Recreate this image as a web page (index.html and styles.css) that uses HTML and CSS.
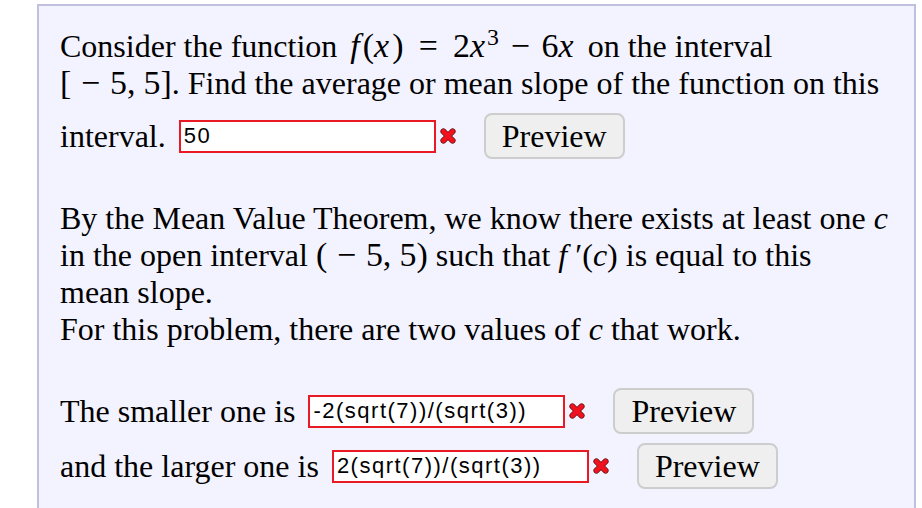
FILE: index.html
```html
<!DOCTYPE html>
<html>
<head>
<meta charset="utf-8">
<link rel="stylesheet" href="styles.css">
</head>
<body>
<div class="problem">
  <div class="para p1">
    <div class="line">Consider the function <span class="m m-eq"><i>f</i>(<i>x</i>)<span class="rel">=</span>2<i class="base">x</i><sup>3</sup><span class="bin">−</span>6<i>x</i></span> on the interval</div>
    <div class="line"><span class="m">[<span class="bin">−</span>5,<span class="thin"></span>5]</span>. Find the average or mean slope of the function on this</div>
    <div class="row">interval.<input class="ans" type="text" value="50"><svg class="x" viewBox="0 0 16 16"><path d="M3.4 3.4L12.6 12.6M12.6 3.4L3.4 12.6" stroke="#6d1414" stroke-width="6" stroke-linecap="round"/><path d="M3.4 3.4L12.6 12.6M12.6 3.4L3.4 12.6" stroke="#f2121f" stroke-width="4.4" stroke-linecap="round"/></svg><button class="btn" type="button">Preview</button></div>
  </div>
  <div class="para p2">
    <div class="line">By the Mean Value Theorem, we know there exists at least one <i>c</i></div>
    <div class="line">in the open interval <span class="m">(<span class="bin">−</span>5,<span class="thin"></span>5)</span> such that <i>f</i>&nbsp;′(<i>c</i>) is equal to this</div>
    <div class="line">mean slope.</div>
    <div class="line">For this problem, there are two values of <i>c</i> that work.</div>
  </div>
  <div class="rows">
    <div class="row">The smaller one is<input class="ans" type="text" value="-2(sqrt(7))/(sqrt(3))"><svg class="x" viewBox="0 0 16 16"><path d="M3.4 3.4L12.6 12.6M12.6 3.4L3.4 12.6" stroke="#6d1414" stroke-width="6" stroke-linecap="round"/><path d="M3.4 3.4L12.6 12.6M12.6 3.4L3.4 12.6" stroke="#f2121f" stroke-width="4.4" stroke-linecap="round"/></svg><button class="btn" type="button">Preview</button></div>
    <div class="row">and the larger one is<input class="ans" type="text" value="2(sqrt(7))/(sqrt(3))"><svg class="x" viewBox="0 0 16 16"><path d="M3.4 3.4L12.6 12.6M12.6 3.4L3.4 12.6" stroke="#6d1414" stroke-width="6" stroke-linecap="round"/><path d="M3.4 3.4L12.6 12.6M12.6 3.4L3.4 12.6" stroke="#f2121f" stroke-width="4.4" stroke-linecap="round"/></svg><button class="btn" type="button">Preview</button></div>
  </div>
</div>
</body>
</html>
```
FILE: styles.css
```css
html, body {
  margin: 0;
  padding: 0;
  background: #ffffff;
}

.problem {
  box-sizing: border-box;
  margin: 4px 0 0 37px;
  width: 879px;
  min-height: 540px;
  border: 2px solid #bfbfe0;
  border-bottom: none;
  background: #f3f3ff;
  padding: 22px 0 30px 21px;
  font-family: "Liberation Serif", "Times New Roman", serif;
  font-size: 32px;
  color: #000;
}

.line {
  line-height: 37px;
  white-space: nowrap;
}

.line i {
  font-style: italic;
}

.m {
  white-space: nowrap;
  font-size: 1.06em;
  line-height: 0;
}

.m-eq {
  margin: 0 3px 0 5px;
}

.m i {
  font-style: italic;
  padding-right: 0.09em;
}

.m i.base {
  padding-right: 0.03em;
}

.m sup {
  font-size: 0.7em;
  line-height: 0;
  vertical-align: 0.5em;
  margin-left: 1px;
}

.rel, .bin {
  display: inline-block;
  width: 0.74em;
  text-align: center;
}

.rel {
  margin: 0 0.36em;
}

.bin {
  margin: 0 0.2em;
}

.m-eq .bin {
  margin: 0 0.26em;
}

.thin {
  display: inline-block;
  width: 0.24em;
}

.row {
  display: flex;
  align-items: center;
  height: 46px;
  white-space: nowrap;
  line-height: 37px;
}

.p1 .row {
  margin-top: 11px;
}

.p2 {
  margin-top: 41px;
}

.rows {
  margin-top: 40px;
  display: flex;
  flex-direction: column;
  gap: 9px;
}

.ans {
  box-sizing: border-box;
  margin: 0 0 0 13px;
  width: 257px;
  height: 33px;
  border: 2px solid #ea1a24;
  border-radius: 0;
  background: #fff;
  padding: 0 3px;
  font-family: "Liberation Sans", Arial, sans-serif;
  font-size: 22px;
  letter-spacing: 1.5px;
  color: #000;
  outline: none;
}

.x {
  margin-left: 4px;
  width: 16px;
  height: 16px;
  flex: none;
}

.btn {
  margin-left: 28px;
  box-sizing: border-box;
  height: 46px;
  padding: 0 16px;
  border: 2px solid #cdcdcd;
  border-radius: 8px;
  background: #efefef;
  font-family: "Liberation Serif", "Times New Roman", serif;
  font-size: 32px;
  line-height: 40px;
  color: #000;
}
```
